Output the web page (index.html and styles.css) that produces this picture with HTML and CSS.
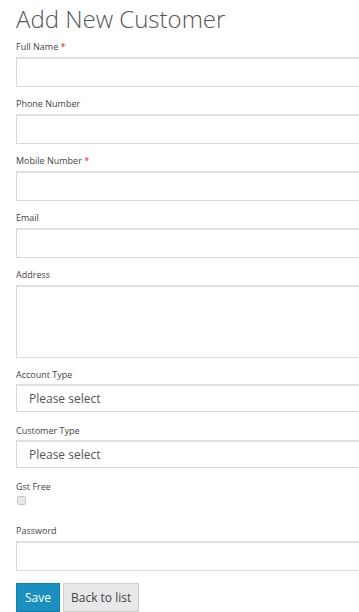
FILE: index.html
```html
<!DOCTYPE html>
<html lang="en">
<head>
  <meta charset="UTF-8">
  <meta name="viewport" content="width=device-width, initial-scale=1.0">
  <title>Add New Customer</title>
  <link rel="stylesheet" href="styles.css">
</head>
<body>
  <div class="page">
    <h2 class="title">Add New Customer</h2>

    <form class="customer-form">
      <div class="form-group">
        <label>Full Name <span class="req">*</span></label>
        <input type="text" class="form-control">
      </div>

      <div class="form-group">
        <label>Phone Number</label>
        <input type="text" class="form-control">
      </div>

      <div class="form-group">
        <label>Mobile Number <span class="req">*</span></label>
        <input type="text" class="form-control">
      </div>

      <div class="form-group">
        <label>Email</label>
        <input type="text" class="form-control">
      </div>

      <div class="form-group">
        <label>Address</label>
        <textarea class="form-control address"></textarea>
      </div>

      <div class="form-group select-group">
        <label>Account Type</label>
        <select class="form-control">
          <option>Please select</option>
        </select>
      </div>

      <div class="form-group select-group">
        <label>Customer Type</label>
        <select class="form-control">
          <option>Please select</option>
        </select>
      </div>

      <div class="form-group check-group">
        <label>Gst Free</label>
        <input type="checkbox" class="check">
      </div>

      <div class="form-group">
        <label>Password</label>
        <input type="password" class="form-control">
      </div>

      <div class="actions">
        <button type="button" class="btn btn-save">Save</button>
        <button type="button" class="btn btn-back">Back to list</button>
      </div>
    </form>
  </div>
</body>
</html>
```

FILE: styles.css
```css
* {
  box-sizing: border-box;
}

html, body {
  overflow-x: hidden;
}

body {
  font-family: 'Open Sans', 'Liberation Sans', sans-serif;
  margin: 0;
  background: #fff;
  color: #555;
}

.page {
  padding: 0 0 0 16px;
  width: 420px;
}

.title {
  font-size: 24px;
  font-weight: 300;
  color: #555;
  margin: 0;
  padding-top: 3px;
  line-height: 32px;
}

.form-group {
  margin-bottom: 11px;
}

.form-group label {
  display: block;
  font-size: 9px;
  line-height: 11px;
  color: #444;
  margin-bottom: 5px;
}

.customer-form {
  padding-top: 6px;
}

.req {
  color: #e02020;
}

.form-control {
  display: block;
  width: 100%;
  height: 30px;
  padding: 4px 12px;
  border: 1px solid #d9d9d9;
  border-top: 2px solid #e0e0e0;
  border-radius: 0;
  background: #fff;
  font-family: inherit;
  font-size: 12px;
  color: #555;
}

.address {
  height: 73px;
  resize: none;
}

.select-group {
  margin-bottom: 13px;
}

.select-group label {
  margin-bottom: 4px;
}

select.form-control {
  height: 28px;
  -webkit-appearance: none;
  appearance: none;
}

.check-group {
  margin-bottom: 20px;
}

.check-group label {
  margin-bottom: 4px;
}

.check {
  -webkit-appearance: none;
  appearance: none;
  display: block;
  width: 9px;
  height: 9px;
  margin: 0 0 0 1px;
  border: 1px solid #c4c4c4;
  border-radius: 2px;
  background: #e8e8e8;
}

.actions {
  display: flex;
  gap: 3px;
  padding-top: 1px;
}

.btn {
  height: 29px;
  padding: 0 8px;
  font-family: inherit;
  font-size: 12px;
  border-radius: 0;
  cursor: pointer;
}

.btn-save {
  background: #1a8fc0;
  color: #fff;
  border: 1px solid #1580ad;
}

.btn-back {
  padding: 0 7px;
  background: #e8e8e8;
  color: #444;
  border: 1px solid #cfcfcf;
}
```
